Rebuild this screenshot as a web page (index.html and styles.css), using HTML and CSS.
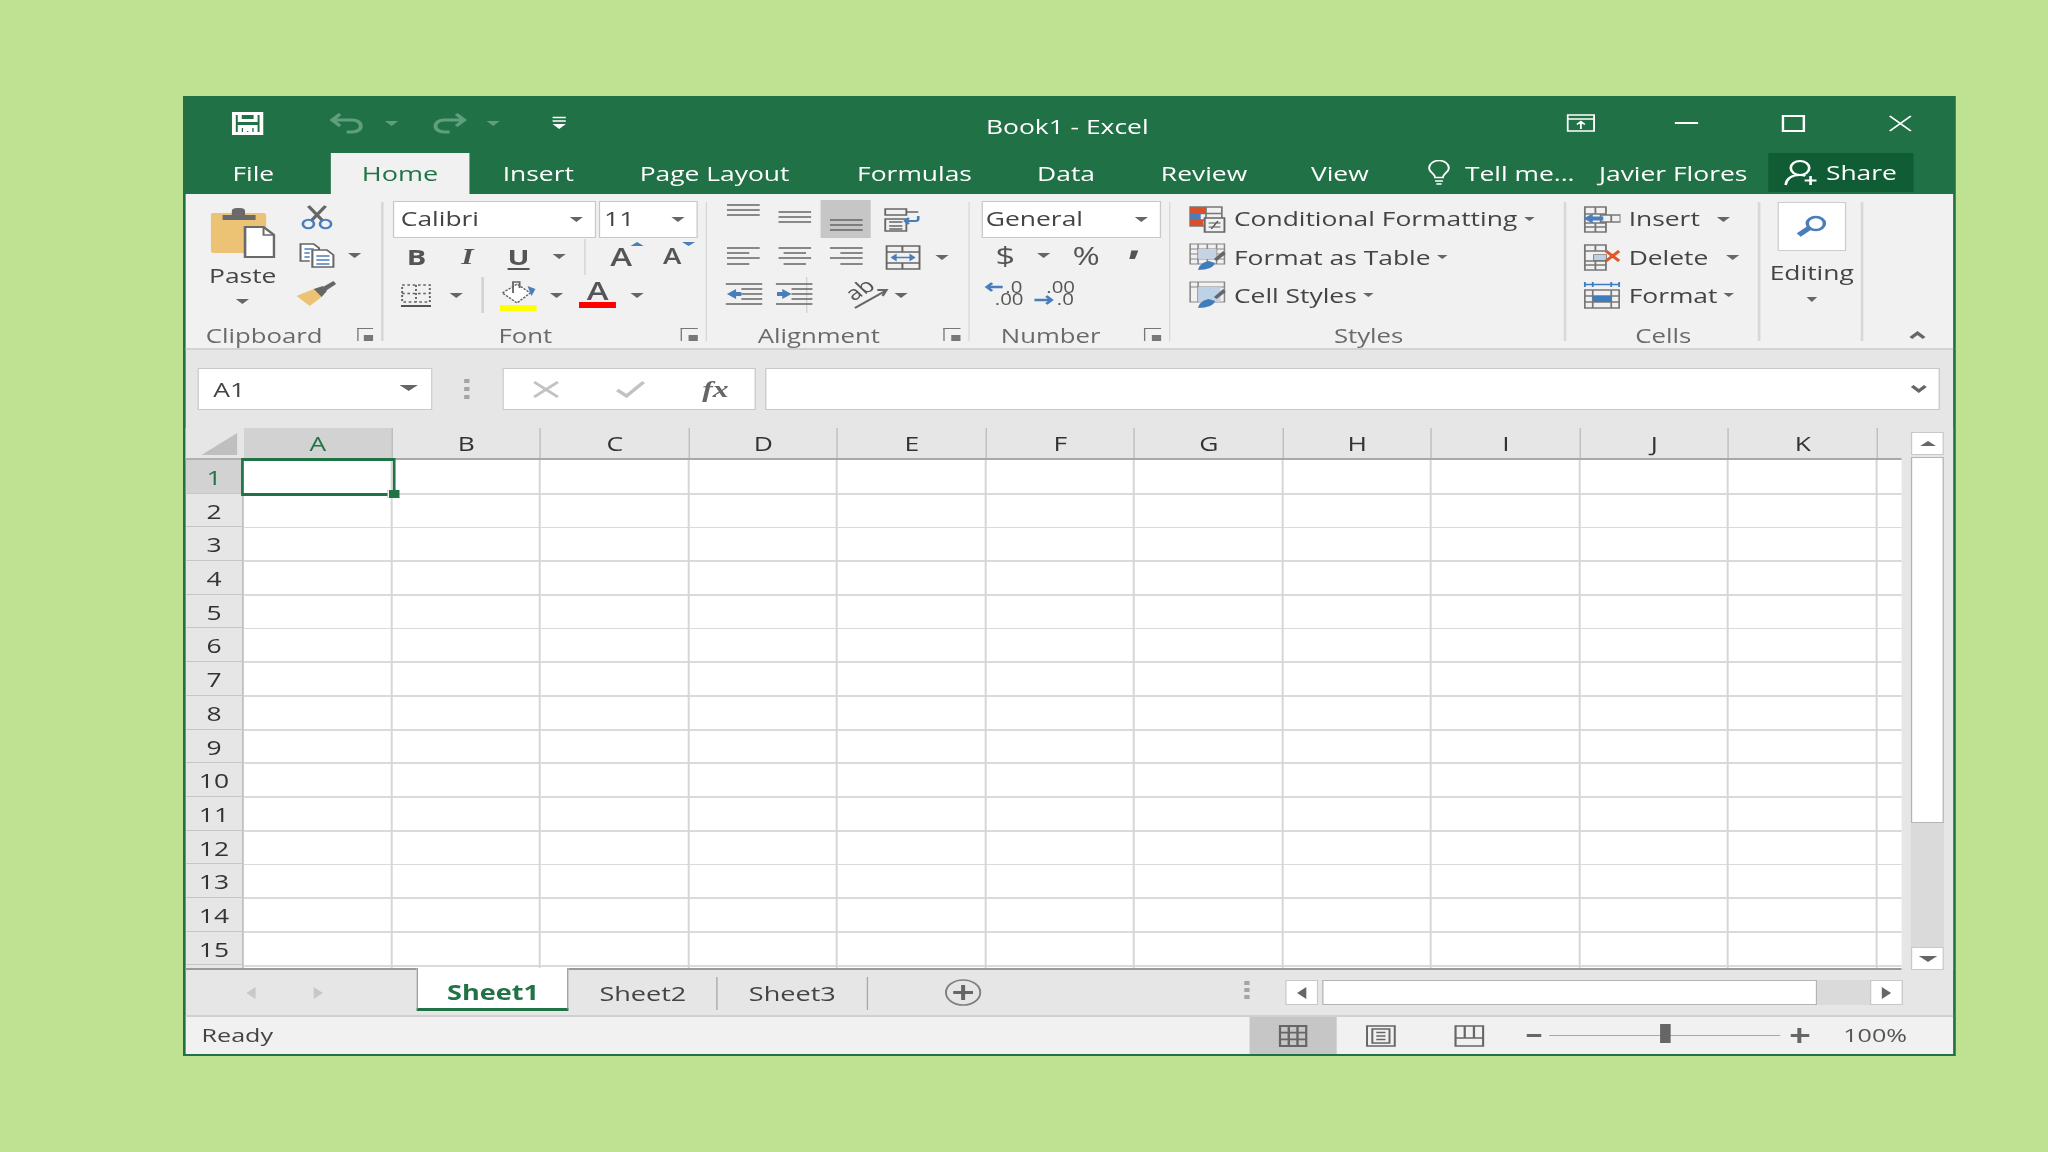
FILE: index.html
```html
<!DOCTYPE html>
<html lang="en">
<head>
<meta charset="utf-8">
<title>Book1 - Excel</title>
<link rel="stylesheet" href="styles.css">
</head>
<body>
<div class="window">
  <header class="titlebar">
    <div class="qat">
      <svg class="q-save" width="24" height="23" viewBox="0 0 24 23"><path d="M1.500 1.500h21v20h-21z M6 1.500v7h12v-7 M6 21.500v-7h12v7 M10 21.500v-4h4v4" fill="none" stroke="#fff" stroke-width="3"/></svg>
      <svg class="q-undo" width="30" height="22" viewBox="0 0 30 22"><path d="M9 2 3 8l6 6M3 8h15c9 0 9 12 0 12h-4" fill="none" stroke="#5f9f7d" stroke-width="3"/></svg>
      <span class="q-caret q-c1"></span>
      <svg class="q-redo" width="30" height="22" viewBox="0 0 30 22"><path d="M21 2l6 6-6 6M27 8H12c-9 0-9 12 0 12h4" fill="none" stroke="#5f9f7d" stroke-width="3"/></svg>
      <span class="q-caret q-c2"></span>
      <svg class="q-more" width="16" height="14" viewBox="0 0 16 14"><path d="M3 1.500h10M3 5h10" stroke="#fff" stroke-width="1.600"/><path d="M3 8h10l-5 5z" fill="#fff"/></svg>
    </div>
    <div class="doc-title">Book1 - Excel</div>
    <div class="winctl">
      <span class="winbtn"><svg width="22" height="18" viewBox="0 0 22 18"><path d="M1 1h20v16H1zM1 5h20M11 15V8M8 10.500l3-3 3 3" fill="none" stroke="#fff" stroke-width="1.400"/></svg></span>
      <span class="winbtn"><svg width="18" height="4" viewBox="0 0 18 4"><path d="M0 2h18" stroke="#fff" stroke-width="2"/></svg></span>
      <span class="winbtn"><svg width="18" height="17" viewBox="0 0 18 17"><path d="M1 1h16v15H1z" fill="none" stroke="#fff" stroke-width="2"/></svg></span>
      <span class="winbtn"><svg width="18" height="17" viewBox="0 0 18 17"><path d="M1 1l16 15M17 1 1 16" fill="none" stroke="#fff" stroke-width="1.600"/></svg></span>
    </div>
  </header>

  <nav class="tabs">
    <span class="tab t-file">File</span>
    <span class="tab t-home">Home</span>
    <span class="tab t-insert">Insert</span>
    <span class="tab t-page">Page Layout</span>
    <span class="tab t-formulas">Formulas</span>
    <span class="tab t-data">Data</span>
    <span class="tab t-review">Review</span>
    <span class="tab t-view">View</span>
    <svg class="bulb" width="17" height="25" viewBox="0 0 17 25"><path d="M5.500 17.500c0-4-4.500-5-4.500-9.500a7.500 7.500 0 0 1 15 0c0 4.500-4.500 5.500-4.500 9.500z M5.500 21h6M6.500 24h4" fill="none" stroke="#fff" stroke-width="1.500"/></svg>
    <span class="tellme">Tell me...</span>
    <span class="user">Javier Flores</span>
    <span class="share">
      <svg width="26" height="27" viewBox="0 0 26 27"><circle cx="12" cy="9" r="7" fill="none" stroke="#fff" stroke-width="2"/><path d="M1 26c1-7 5-10 11-10 2 0 3 .4 4 1M20 17v9M15.500 21.500h9" fill="none" stroke="#fff" stroke-width="2"/></svg>
      Share
    </span>
  </nav>

  <section class="ribbon">
    <div class="group g-clip">
      <div class="clip-body">
        <div class="paste">
          <svg width="49" height="51" viewBox="0 0 49 51"><rect x="0" y="6" width="42" height="40" rx="2" fill="#ecc274"/><path d="M9 8h7V4q0-3 4-3h2q4 0 4 3v4h8v5H9z" fill="#6a6a6a"/><path d="M26 20h14l8 8v22H26z" fill="#fff" stroke="#6a6a6a" stroke-width="2"/><path d="M40 20v8h8" fill="none" stroke="#6a6a6a" stroke-width="1.500"/></svg>
          <span class="paste-label">Paste</span>
          <span class="caret"></span>
        </div>
        <div class="clip-small">
          <div class="row">
            <span class="btn">
              <svg width="25" height="25" viewBox="0 0 25 25"><path d="M6 1 17 16M19 1 8 16" stroke="#666" stroke-width="2.800"/><circle cx="6" cy="19" r="4.200" fill="none" stroke="#4a7ebb" stroke-width="2"/><circle cx="19" cy="19" r="4.200" fill="none" stroke="#4a7ebb" stroke-width="2"/></svg>
            </span>
          </div>
          <div class="row">
            <span class="btn">
              <svg width="27" height="25" viewBox="0 0 27 25"><path d="M8 18H1V1h10l4 4v2" fill="#fff" stroke="#666" stroke-width="1.600"/><path d="M10 7h11l5 5v12H10z" fill="#fff" stroke="#666" stroke-width="1.600"/><path d="M4 6h7M4 10h4M4 14h4M13 13h10M13 17h10M13 21h10" stroke="#4a7ebb" stroke-width="1.500"/></svg>
            </span>
            <span class="cbtn cbtn-c"><span class="caret"></span></span>
          </div>
          <div class="row">
            <span class="btn">
              <svg width="30" height="26" viewBox="0 0 30 26"><path d="M0 16 13 9l6 8-9 9z" fill="#ecc274"/><path d="m13 9 7-3 3 5-4 6z" fill="#666"/><path d="m20 7 8-6 2 3-8 7z" fill="#666"/></svg>
            </span>
          </div>
        </div>
      </div>
      <div class="glabel glabel-l">Clipboard<span class="launch"></span></div>
    </div>

    <div class="group g-font">
      <div class="rows">
        <div class="row row-box">
          <span class="combo c-font"><span class="combo-text">Calibri</span><span class="caret"></span></span>
          <span class="combo c-size"><span class="combo-text">11</span><span class="caret"></span></span>
        </div>
        <div class="row row-up">
          <span class="btn b-text b-bold">B</span>
          <span class="btn b-text b-ital">I</span>
          <span class="btn b-text b-under">U</span>
          <span class="cbtn"><span class="caret"></span></span>
          <span class="vsep vs-1"></span>
          <span class="btn b-grow">A<span class="tri-up"></span></span>
          <span class="btn b-shrink">A<span class="tri-down"></span></span>
        </div>
        <div class="row">
          <span class="btn">
            <svg width="23" height="23" viewBox="0 0 23 23"><path d="M1 1h21v17H1zM1 9.500h21M11.500 1v17" fill="none" stroke="#666" stroke-width="1.500" stroke-dasharray="2 2"/><path d="M0 22h23" stroke="#555" stroke-width="2"/></svg>
          </span>
          <span class="cbtn"><span class="caret"></span></span>
          <span class="vsep vs-2"></span>
          <span class="btn b-color b-fill">
            <svg width="28" height="31" viewBox="0 0 28 31"><path d="M2 13 13 4l10 9-10 10z" fill="#fff" stroke="#666" stroke-width="1.300" stroke-dasharray="2 1"/><path d="M10 13V2h5v6" fill="none" stroke="#666" stroke-width="1.400"/><path d="m21 6 6 3-3 7z" fill="#4a7ebb"/><rect y="25" width="28" height="6" fill="#ff0"/></svg>
          </span>
          <span class="cbtn"><span class="caret"></span></span>
          <span class="btn b-color b-fc">A<span class="bar-red"></span></span>
          <span class="cbtn"><span class="caret"></span></span>
        </div>
      </div>
      <div class="glabel glabel-l">Font<span class="launch"></span></div>
    </div>

    <div class="group g-align">
      <div class="rows">
        <div class="row">
          <span class="btn"><svg width="25" height="38" viewBox="0 0 25 38"><path d="M0 5h25M0 10h25M0 15h25" stroke="#666" stroke-width="1.500"/></svg></span>
          <span class="btn"><svg width="25" height="38" viewBox="0 0 25 38"><path d="M0 12h25M0 17h25M0 22h25" stroke="#666" stroke-width="1.500"/></svg></span>
          <span class="btn btn-on"><svg width="25" height="38" viewBox="0 0 25 38"><path d="M0 20h25M0 25h25M0 30h25" stroke="#666" stroke-width="1.500"/></svg></span>
          <span class="btn btn-wide"><svg width="28" height="25" viewBox="0 0 28 25"><path d="M1 2h16v6H1zM1 12h16v12H1zM17 5h9M4 15h10M4 19h10M4 22h10" fill="none" stroke="#666" stroke-width="1.400"/><path d="M26 9v3q0 2-2 2h-8m3-3-3 3 3 3" fill="none" stroke="#4a7ebb" stroke-width="2"/></svg></span>
        </div>
        <div class="row">
          <span class="btn"><svg width="25" height="38" viewBox="0 0 25 38"><path d="M0 10h25M0 15h17M0 20h25M0 26h17" stroke="#666" stroke-width="1.500"/></svg></span>
          <span class="btn"><svg width="25" height="38" viewBox="0 0 25 38"><path d="M0 10h25M4 15h17M0 20h25M4 26h17" stroke="#666" stroke-width="1.500"/></svg></span>
          <span class="btn"><svg width="25" height="38" viewBox="0 0 25 38"><path d="M0 10h25M8 15h17M0 20h25M8 26h17" stroke="#666" stroke-width="1.500"/></svg></span>
          <span class="btn btn-wide"><svg width="27" height="25" viewBox="0 0 27 25"><path d="M1 1h25v23H1zM1 7h25M1 18h25M13 1v6M13 18v6" fill="none" stroke="#666" stroke-width="1.500"/><path d="M5 12.500h17M5 12.500l3-2.500v5zM22 12.500l-3-2.500v5z" fill="#4a7ebb" stroke="#4a7ebb" stroke-width="1.300"/></svg></span>
          <span class="cbtn cbtn-n"><span class="caret"></span></span>
        </div>
        <div class="row">
          <span class="btn"><svg width="28" height="38" viewBox="0 0 28 38"><path d="M0 8h28M12 13h16M12 18h16M12 23h16M0 28h28" stroke="#666" stroke-width="1.500"/><path d="M1 18l7-5v3h4v4H8v3z" fill="#4a7ebb"/></svg></span>
          <span class="btn"><svg width="28" height="38" viewBox="0 0 28 38"><path d="M0 8h28M12 13h16M12 18h16M12 23h16M0 28h28" stroke="#666" stroke-width="1.500"/><path d="M12 18l-7-5v3H1v4h4v3z" fill="#4a7ebb"/></svg></span>
          <span class="vsep vs-3"></span>
          <span class="btn b-orient"><svg class="svg-open" width="36" height="26" viewBox="0 0 36 26"><text x="3" y="16" class="rot-text" transform="rotate(-38 10 12)">ab</text><path d="M8 26 31 9M25 8l7 0-3 6" fill="none" stroke="#666" stroke-width="1.800"/></svg></span>
          <span class="cbtn cbtn-o"><span class="caret"></span></span>
        </div>
      </div>
      <div class="glabel glabel-l">Alignment<span class="launch"></span></div>
    </div>

    <div class="group g-num">
      <div class="rows">
        <div class="row row-box">
          <span class="combo c-num"><span class="combo-text">General</span><span class="caret"></span></span>
        </div>
        <div class="row row-n2">
          <span class="btn b-dollar">$</span>
          <span class="cbtn"><span class="caret"></span></span>
          <span class="btn b-pct">%</span>
          <span class="btn b-comma">,</span>
        </div>
        <div class="row row-n3">
          <span class="btn"><svg class="svg-open" width="32" height="26" viewBox="0 0 32 26"><text x="17" y="11" class="dec-text">.0</text><text x="9" y="23" class="dec-text">.00</text><path d="M15 5H3m4-4-4 4 4 4" fill="none" stroke="#4a7ebb" stroke-width="2.400"/></svg></span>
          <span class="btn"><svg class="svg-open" width="32" height="26" viewBox="0 0 32 26"><text x="9" y="11" class="dec-text">.00</text><text x="17" y="23" class="dec-text">.0</text><path d="M0 18h13m-4-4 4 4-4 4" fill="none" stroke="#4a7ebb" stroke-width="2.400"/></svg></span>
        </div>
      </div>
      <div class="glabel glabel-l">Number<span class="launch"></span></div>
    </div>

    <div class="group g-styles">
      <div class="rows">
        <div class="row">
          <svg class="sic" width="28" height="27" viewBox="0 0 28 27"><path d="M1 1h24v19H1zM1 7.500h24M1 14h24M13 1v19" fill="none" stroke="#777" stroke-width="1.300"/><rect x="1" y="1" width="12" height="6.500" fill="#d9502c"/><rect x="1" y="7.500" width="8" height="6.500" fill="#4a7ebb"/><rect x="1" y="14" width="10" height="6" fill="#d9502c"/><rect x="12" y="12" width="15" height="14" fill="#f1f1f1" stroke="#666" stroke-width="1.500"/><path d="M15 17h9M15 21h9M22 15l-5 8" stroke="#555" stroke-width="1.200" fill="none"/></svg>
          <span class="stext stext-up">Conditional Formatting</span><span class="caret caret-t"></span>
        </div>
        <div class="row">
          <svg class="sic" width="28" height="28" viewBox="0 0 28 28"><path d="M1 1h26v20H1zM1 6h26M1 11h26M1 16h26M7 1v20M14 1v20M21 1v20" fill="none" stroke="#888" stroke-width="1.200"/><rect x="7" y="6" width="14" height="10" fill="#c5d3e3"/><path d="m19 16 7-8 2 3-7 7z" fill="#666"/><path d="M7 27q1-7 8-9l5 2q-2 7-13 7z" fill="#3f7cbd"/></svg>
          <span class="stext">Format as Table</span><span class="caret caret-t"></span>
        </div>
        <div class="row">
          <svg class="sic" width="28" height="28" viewBox="0 0 28 28"><path d="M1 1h26v20H1zM1 6h26M7 1v20" fill="none" stroke="#888" stroke-width="1.200"/><rect x="7" y="6" width="17" height="15" fill="#bed2e6"/><path d="m19 16 7-8 2 3-7 7z" fill="#666"/><path d="M7 27q1-7 8-9l5 2q-2 7-13 7z" fill="#3f7cbd"/></svg>
          <span class="stext">Cell Styles</span><span class="caret caret-t"></span>
        </div>
      </div>
      <div class="glabel">Styles</div>
    </div>

    <div class="group g-cells">
      <div class="rows">
        <div class="row">
          <svg class="sic" width="28" height="28" viewBox="0 0 28 28"><path d="M1 2h16v7H1zM1 18h16v9H1zM9 2v7M9 18v9M1 22h16M1 9v9M13 10h15v7H13zM21 10v7" fill="none" stroke="#777" stroke-width="1.400"/><path d="M0 13.500l7-5v3h8v4H7v3z" fill="#4a7ebb"/></svg>
          <span class="stext stext-up">Insert</span><span class="caret caret-far"></span>
        </div>
        <div class="row">
          <svg class="sic" width="28" height="28" viewBox="0 0 28 28"><path d="M1 2h16v6H1zM1 18h16v9H1zM9 2v6M9 18v9M1 22h16M8 12h9v5H8zM1 8v10" fill="none" stroke="#777" stroke-width="1.400"/><rect x="8" y="12" width="9" height="5" fill="#bed2e6"/><path d="m17 8 10 10M27 8 17 18" stroke="#e0572c" stroke-width="2.600"/></svg>
          <span class="stext">Delete</span><span class="caret caret-far"></span>
        </div>
        <div class="row">
          <svg class="sic" width="28" height="29" viewBox="0 0 28 29"><path d="M1 1v5M7 1v5M21 1v5M27 1v5M1 3.500h26" stroke="#3f7cbd" stroke-width="1.400" fill="none"/><path d="M1 9h26v18H1zM1 15h26M1 21h26M7 9v18M21 9v18" fill="none" stroke="#777" stroke-width="1.300"/><rect x="7" y="15" width="14" height="6" fill="#3f7cbd"/></svg>
          <span class="stext">Format</span><span class="caret caret-t"></span>
        </div>
      </div>
      <div class="glabel">Cells</div>
    </div>

    <div class="group g-edit">
      <span class="find-btn"><svg width="24" height="23" viewBox="0 0 24 23"><circle cx="15" cy="8.500" r="6.500" fill="#fff" stroke="#4a7ebb" stroke-width="2.600"/><path d="M10 13 2 20" stroke="#4a7ebb" stroke-width="4.500"/></svg></span>
      <span class="edit-label">Editing</span>
      <span class="caret"></span>
    </div>

    <div class="group g-collapse">
      <svg width="14" height="10" viewBox="0 0 14 10"><path d="M2 8l5-5 5 5" fill="none" stroke="#666" stroke-width="3"/></svg>
    </div>
  </section>

  <section class="fbar">
    <div class="namebox"><span class="nb-text">A1</span><span class="caret caret-lg"></span></div>
    <div class="fdots"><i></i><i></i><i></i></div>
    <div class="fxbox">
      <span class="fxbtn"><svg width="22" height="17" viewBox="0 0 22 17"><path d="M2 1l18 15M20 1 2 16" stroke="#c2c2c2" stroke-width="2.400"/></svg></span>
      <span class="fxbtn"><svg width="24" height="18" viewBox="0 0 24 18"><path d="M2 10l7 6L22 2" fill="none" stroke="#c2c2c2" stroke-width="3"/></svg></span>
      <span class="fxbtn fx-text">fx</span>
    </div>
    <div class="fxinput"><svg width="14" height="10" viewBox="0 0 14 10"><path d="M2 2l5 5 5-5" fill="none" stroke="#666" stroke-width="3"/></svg></div>
  </section>

  <section class="gridarea">
    <div class="sheet">
      <div class="corner"><span class="corner-tri"></span></div>
      <div class="colheads">
        <span class="ch ch-on">A</span><span class="ch">B</span><span class="ch">C</span><span class="ch">D</span><span class="ch">E</span><span class="ch">F</span><span class="ch">G</span><span class="ch">H</span><span class="ch">I</span><span class="ch">J</span><span class="ch">K</span>
      </div>
      <div class="rowheads">
        <span class="rh rh-on">1</span><span class="rh">2</span><span class="rh">3</span><span class="rh">4</span><span class="rh">5</span><span class="rh">6</span><span class="rh">7</span><span class="rh">8</span><span class="rh">9</span><span class="rh">10</span><span class="rh">11</span><span class="rh">12</span><span class="rh">13</span><span class="rh">14</span><span class="rh">15</span>
      </div>
      <div class="cells"><div class="sel"><span class="sel-handle"></span></div></div>
    </div>
    <div class="vscroll">
      <span class="sbtn"><span class="tri-up-g"></span></span>
      <span class="vthumb"></span>
      <span class="vtrack"></span>
      <span class="sbtn"><span class="caret caret-lg"></span></span>
    </div>
  </section>

  <section class="sheetbar">
    <div class="nav"><span class="nav-l"></span><span class="nav-r"></span></div>
    <span class="stab stab-on">Sheet1</span>
    <span class="stab">Sheet2</span>
    <span class="stab stab-last">Sheet3</span>
    <svg class="addsheet" width="28" height="27" viewBox="0 0 28 27"><ellipse cx="14" cy="13.500" rx="13" ry="12.500" fill="none" stroke="#808080" stroke-width="1.500"/><path d="M14 6v15M6.500 13.500h15" stroke="#666" stroke-width="3"/></svg>
    <div class="hdots"><i></i><i></i><i></i></div>
    <div class="hscroll">
      <span class="sbtn sbtn-h"><span class="nav-l nav-dk"></span></span>
      <span class="hthumb"></span>
      <span class="htrack"></span>
      <span class="sbtn sbtn-h"><span class="nav-r nav-dk"></span></span>
    </div>
  </section>

  <footer class="status">
    <span class="ready">Ready</span>
    <span class="vbtn vbtn-on"><svg width="22" height="22" viewBox="0 0 22 22"><path d="M1 1h20v20H1zM1 7.700h20M1 14.300h20M7.700 1v20M14.300 1v20" fill="none" stroke="#666" stroke-width="1.800"/></svg></span>
    <span class="vbtn"><svg width="23" height="22" viewBox="0 0 23 22"><path d="M1 1h21v20H1zM5 4h13v14H5z" fill="none" stroke="#666" stroke-width="1.500"/><path d="M8 7.500h7M8 11h7M8 14.500h7" stroke="#666" stroke-width="1.500"/></svg></span>
    <span class="vbtn"><svg width="23" height="22" viewBox="0 0 23 22"><path d="M1 1h21v20H1zM1 13h21M8 1v12M15 1v12" fill="none" stroke="#666" stroke-width="1.700"/></svg></span>
    <span class="zbtn zoom-minus"></span>
    <span class="zslider"><span class="zthumb"></span></span>
    <span class="zbtn zoom-plus"></span>
    <span class="zpct">100%</span>
  </footer>
</div>
</body>
</html>
```
FILE: styles.css
```css
* { box-sizing: border-box; }
html, body { margin: 0; height: 100%; }
body {
  background: #bee291;
  padding: 96px 0 0 182.500px;
  overflow: hidden;
  font-family: "Open Sans", "Noto Sans", sans-serif;
  color: #444;
}

/* The whole window of the reference is stretched sideways. */
.window {
  width: 1342.800px;
  height: 960px;
  padding: 0 1.500px 2px;
  display: flex;
  flex-direction: column;
  background: #217147;
  transform: scaleX(1.32);
  transform-origin: 0 0;
  filter: blur(.35px);
}

/* title bar */
.titlebar { height: 57px; flex: none; display: grid; grid-template-columns: 1fr auto 1fr; align-items: start; color: #fff; }
.qat { height: 54px; display: flex; align-items: center; }
.q-save { margin-left: 35px; flex: none; }
.q-undo { margin-left: 49.500px; flex: none; }
.q-redo { margin-left: 22.500px; flex: none; }
.q-caret { width: 0; height: 0; border: 5px solid transparent; border-top-color: #5f9f7d; border-bottom-width: 0; flex: none; }
.q-c1 { margin-left: 13px; }
.q-c2 { margin-left: 14px; }
.q-more { margin-left: 37px; flex: none; }
.doc-title { font-size: 20px; line-height: 62px; white-space: nowrap; margin-right: 3px; }
.winctl { display: flex; justify-content: flex-end; }
.winbtn { width: 80.800px; height: 54px; display: flex; align-items: center; justify-content: center; }

/* ribbon tabs */
.tabs { height: 41px; flex: none; display: flex; align-items: stretch; color: #fff; font-size: 20px; line-height: 41px; white-space: nowrap; }
.tab { display: block; text-align: center; flex: none; }
.t-file { width: 103.500px; }
.t-home { width: 104.700px; margin-left: 7px; background: #f1f1f1; color: #217346; font-size: 20.500px; }
.t-insert { width: 105px; }
.t-page { width: 162px; }
.t-formulas { width: 141px; }
.t-data { width: 88.600px; }
.t-review { width: 120.400px; }
.t-view { width: 85.400px; }
.bulb { margin: 7px 0 0 23.600px; flex: none; }
.tellme { margin-left: 11.500px; width: 85px; flex: none; }
.user { margin-left: 16.500px; width: 108px; flex: none; }
.share { margin-left: 20px; width: 110.500px; height: 39px; flex: none; background: #0f5c35; display: flex; align-items: center; gap: 6px; padding-left: 12px; }

/* ribbon */
.ribbon { height: 156px; flex: none; display: flex; background: #f1f1f1; border-bottom: 2px solid #d2d2d2; }
.group { position: relative; height: 154px; padding-top: 6px; display: flex; flex-direction: column; flex: none; }
.group::after { content: ""; position: absolute; right: 0; top: 8px; bottom: 7px; width: 1.500px; background: #d8d8d8; }
.g-clip { width: 150px; }
.g-font { width: 245.800px; padding-left: 6px; }
.g-align { width: 198.900px; padding-left: 8px; }
.g-num { width: 152.300px; padding-left: 9px; }
.g-styles { width: 299.400px; padding-left: 13.700px; }
.g-cells { width: 147px; padding-left: 13.300px; }
.g-edit { width: 78px; padding-top: 8px; align-items: center; }
.g-collapse { flex: 1; flex-direction: row; align-items: flex-end; justify-content: center; padding: 0 0 8px 14px; }
.g-collapse::after { display: none; }

.rows { height: 114px; display: flex; flex-direction: column; }
.row { height: 38px; flex: none; display: flex; align-items: center; font-size: 20px; white-space: nowrap; }
.row-up > * { margin-top: -2px; }
.stext-up { margin-top: -2px; }
.glabel { position: relative; margin-top: auto; height: 28px; line-height: 28px; text-align: center; font-size: 19.500px; color: #6a6a6a; padding-top: 2px; }
.glabel-l { padding-right: 30px; }
.g-font .glabel-l { margin-left: -6px; }
.g-align .glabel-l { margin-left: -8px; }
.g-num .glabel-l { margin-left: -9px; }
.g-styles .glabel { margin-left: -13.700px; }
.g-cells .glabel { margin-left: -13.300px; }
.launch { position: absolute; right: 7.500px; top: 8px; width: 12.500px; height: 13px; border-left: 1.500px solid #777; border-top: 1.500px solid #777; }
.launch::after { content: ""; position: absolute; right: 0; bottom: 0; width: 7px; height: 6px; background: #777; }

.caret { display: block; flex: none; width: 0; height: 0; border-left: 5px solid transparent; border-right: 5px solid transparent; border-top: 5px solid #666; }
.caret-lg { border-left-width: 7px; border-right-width: 7px; border-top-width: 6px; }
.caret-t { margin-left: 5px; border-left-width: 4px; border-right-width: 4px; border-top-width: 4px; }
.caret-far { margin-left: 13px; }
.cbtn { width: 22px; height: 38px; flex: none; display: flex; align-items: center; justify-content: center; }
.cbtn-c { margin-left: -2px; }
.cbtn-n { margin-left: -5px; }
.cbtn-o { margin-left: -8px; }
.btn { position: relative; width: 38.700px; height: 38px; flex: none; display: flex; align-items: center; justify-content: center; color: #555; }
.btn-on { background: #c6c6c6; }
.btn-wide { width: 48px; }
.vsep { width: 1.500px; height: 36px; flex: none; background: #d2d2d2; }
.vs-1 { margin: 0 7.500px 0 8px; }
.vs-2 { margin: 0 6.500px 0 8px; }
.vs-3 { margin: 0 24px 0 -11px; }
.svg-open { overflow: visible; }

/* clipboard */
.clip-body { display: flex; }
.paste { width: 80.500px; padding: 7px 0 0 7px; flex: none; display: flex; flex-direction: column; align-items: center; }
.paste-label { font-size: 20px; line-height: 30px; margin-top: 3px; }
.paste .caret { margin-top: 8px; }
.clip-small { margin-top: -2px; }

/* combos */
.row-box { height: 38px; }
.combo { height: 37px; flex: none; display: flex; align-items: center; justify-content: space-between; background: #fff; border: 1.500px solid #c8c8c8; padding: 0 9px 0 5px; color: #444; }
.c-font { width: 154px; margin-left: 1.500px; }
.c-size { width: 74.500px; margin-left: 2px; padding-left: 3px; }
.c-num { width: 135.600px; padding-left: 2px; }
.combo-text { font-size: 20px; line-height: 34px; }

/* font buttons */
.b-text { font-size: 22px; }
.b-bold { font-weight: 700; }
.b-ital { font-style: italic; font-family: "Liberation Serif", serif; font-weight: 700; font-size: 24px; }
.b-under { font-weight: 700; text-decoration: underline; text-underline-offset: 3px; }
.b-grow { font-size: 25px; font-weight: 600; }
.b-shrink { font-size: 21px; font-weight: 600; }
.tri-up, .tri-down { position: absolute; width: 0; height: 0; border-left: 5px solid transparent; border-right: 5px solid transparent; }
.tri-up { right: 2px; top: 5px; border-bottom: 4px solid #4a7ebb; }
.tri-down { right: 2px; top: 5px; border-top: 4px solid #4a7ebb; }
.b-color { width: 37.600px; }
.b-fill svg { margin-left: 3px; }
.b-fc { margin-left: 1.500px; font-size: 25px; font-weight: 600; line-height: 28px; align-items: flex-start; }
.bar-red { position: absolute; left: 5px; bottom: 6px; width: 28px; height: 6px; background: #f00; }

/* number */
.row-n2 { margin: -2px 0 2px -.500px; }
.b-dollar { width: 36.500px; font-size: 26px; }
.b-pct { width: 38px; margin-left: 2px; font-size: 25px; }
.b-comma { width: 35px; font-size: 30px; font-weight: 800; line-height: 1; padding-bottom: 22px; }
.row-n3 { margin-left: -2.600px; }
.dec-text { font-size: 15.500px; fill: #555; }
.rot-text { font-size: 19px; fill: #555; font-family: "Open Sans", sans-serif; }
.b-orient { width: 44px; }

/* styles + cells */
.sic { flex: none; }
.stext { margin-left: 6px; }

/* editing */
.find-btn { width: 52.400px; height: 49px; flex: none; display: flex; align-items: center; justify-content: center; background: #fff; border: 1.500px solid #cdcdcd; }
.edit-label { font-size: 20px; line-height: 30px; margin-top: 7px; }
.g-edit .caret { margin-top: 9px; border-left-width: 4px; border-right-width: 4px; border-top-width: 5px; }

/* formula bar */
.fbar { height: 78px; flex: none; display: flex; align-items: flex-start; padding: 18px 0 0 9.500px; background: #e6e6e6; }
.namebox { width: 177.500px; height: 42px; flex: none; display: flex; align-items: center; justify-content: space-between; padding: 0 10px 0 11px; background: #fff; border: 1.500px solid #c8c8c8; }
.nb-text { font-size: 20px; }
.namebox .caret { margin-bottom: 3px; }
.fdots { width: 53.900px; height: 42px; flex: none; display: flex; flex-direction: column; align-items: center; justify-content: center; gap: 4px; }
.fdots i, .hdots i { display: block; width: 4px; height: 4px; background: #a4a4a4; }
.fxbox { width: 192px; height: 42px; flex: none; display: flex; background: #fff; border: 1.500px solid #c8c8c8; }
.fxbtn { width: 64px; flex: none; display: flex; align-items: center; justify-content: center; }
.fx-text { font-family: "Liberation Serif", serif; font-style: italic; font-weight: 700; font-size: 24px; color: #666; }
.fxinput { width: 889.700px; height: 42px; margin-left: 6.600px; flex: none; display: flex; align-items: center; justify-content: flex-end; padding-right: 8px; background: #fff; border: 1.500px solid #c8c8c8; }

/* sheet grid */
.gridarea { height: 542px; flex: none; display: flex; background: #e6e6e6; }
.sheet { width: 1300.800px; flex: none; display: grid; grid-template-columns: 44.900px 1fr; grid-template-rows: 32px 1fr; border-bottom: 2px solid #9a9a9a; }
.corner { position: relative; background: #e6e6e6; border-bottom: 2px solid #b0b0b0; }
.corner-tri { position: absolute; right: 5px; bottom: 3px; width: 0; height: 0; border-bottom: 22px solid #bfbfbf; border-left: 27px solid transparent; }
.colheads { display: flex; border-bottom: 2px solid #a8a8a8; overflow: hidden; }
.ch { width: 112.500px; flex: none; text-align: center; font-size: 20px; line-height: 32px; color: #333; border-right: 1.500px solid #bcbcbc; }
.ch-on { background: #d2d2d2; color: #217346; }
.rowheads { display: flex; flex-direction: column; overflow: hidden; border-right: 1.500px solid #a8a8a8; }
.rh { height: 33.700px; flex: none; text-align: center; font-size: 20px; line-height: 36px; color: #333; border-bottom: 1.500px solid #c6c6c6; }
.rh-on { background: #d2d2d2; color: #217346; }
.cells {
  position: relative;
  background-color: #fff;
  background-image:
    repeating-linear-gradient(to right, transparent 0 111px, #d6d6d6 111px 112.500px),
    repeating-linear-gradient(to bottom, transparent 0 31.900px, #dadada 31.900px 33.700px);
  background-position: 0 1px;
}
.sel { position: absolute; left: -2.300px; top: -2px; width: 117.400px; height: 38px; border: 3px solid #217346; border-width: 3px 2.400px; }
.sel-handle { position: absolute; right: -4.500px; bottom: -5px; width: 9px; height: 8px; background: #217346; border-left: 1px solid #fff; }

.vscroll { flex: 1; display: flex; flex-direction: column; padding: 4px 0 0 6.800px; background: #e6e6e6; }
.sbtn { width: 25px; height: 23px; flex: none; display: flex; align-items: center; justify-content: center; background: #fff; border: 1.500px solid #c8c8c8; }
.vthumb { width: 25px; height: 366px; margin-top: 2px; flex: none; background: #fff; border: 1.500px solid #b4b4b4; }
.vtrack { width: 25px; flex: 1; background: #dadada; }
.tri-up-g { width: 0; height: 0; border-left: 6px solid transparent; border-right: 6px solid transparent; border-bottom: 5px solid #666; }

/* sheet tabs */
.sheetbar { height: 47px; flex: none; display: flex; align-items: flex-start; background: #e6e6e6; border-bottom: 2px solid #d0d0d0; }
.nav { width: 175.800px; height: 45px; flex: none; display: flex; align-items: center; padding-left: 46px; gap: 44px; }
.nav-l, .nav-r { display: block; width: 0; height: 0; border-top: 6px solid transparent; border-bottom: 6px solid transparent; }
.nav-l { border-right: 7px solid #c8c8c8; }
.nav-r { border-left: 7px solid #c8c8c8; }
.nav-dk.nav-l { border-right-color: #666; }
.nav-dk.nav-r { border-left-color: #666; }
.stab { width: 113.200px; height: 33px; margin-top: 7px; flex: none; text-align: center; font-size: 20.500px; line-height: 33px; color: #444; border-right: 1.500px solid #a8a8a8; }
.stab-on { position: relative; width: 115px; height: 43px; margin-top: -2px; background: #fff; color: #217346; font-weight: 700; line-height: 48px; border: 1.500px solid #9a9a9a; border-width: 0 1.500px; border-bottom: 3px solid #217346; }
.addsheet { margin: 9px 0 0 58px; flex: none; }
.hdots { margin: 11px 27px 0 auto; display: flex; flex-direction: column; gap: 3px; flex: none; }
.hscroll { width: 468.200px; height: 25px; margin: 10px 37.900px 0 0; flex: none; display: flex; }
.sbtn-h { width: 25px; height: 25px; }
.hthumb { width: 375.800px; height: 25px; margin-left: 2.400px; flex: none; background: #fff; border: 1.500px solid #b4b4b4; }
.htrack { flex: 1; background: #dadada; }

/* status bar */
.status { flex: 1; display: flex; align-items: stretch; padding-left: 12.600px; background: #f1f1f1; font-size: 19px; }
.ready { width: 794.200px; flex: none; line-height: 37px; }
.vbtn { width: 67px; flex: none; display: flex; align-items: center; justify-content: center; }
.vbtn-on { width: 65.900px; background: #c6c6c6; }
.zbtn { position: relative; width: 30px; flex: none; }
.zbtn::before { content: ""; position: absolute; left: 9.500px; top: 17px; width: 11px; height: 3px; background: #666; }
.zoom-plus::after { content: ""; position: absolute; left: 13.500px; top: 11px; width: 3px; height: 15px; background: #666; }
.zoom-plus::before { left: 8px; width: 14px; }
.zslider { position: relative; width: 175px; margin-left: -3.400px; flex: none; }
.zslider::before { content: ""; position: absolute; left: 0; right: 0; top: 17.500px; height: 1.500px; background: #a8a8a8; }
.zthumb { position: absolute; left: 84px; top: 7px; width: 8px; height: 19px; background: #666; }
.zpct { margin-left: 18px; line-height: 37px; color: #555; }
```
